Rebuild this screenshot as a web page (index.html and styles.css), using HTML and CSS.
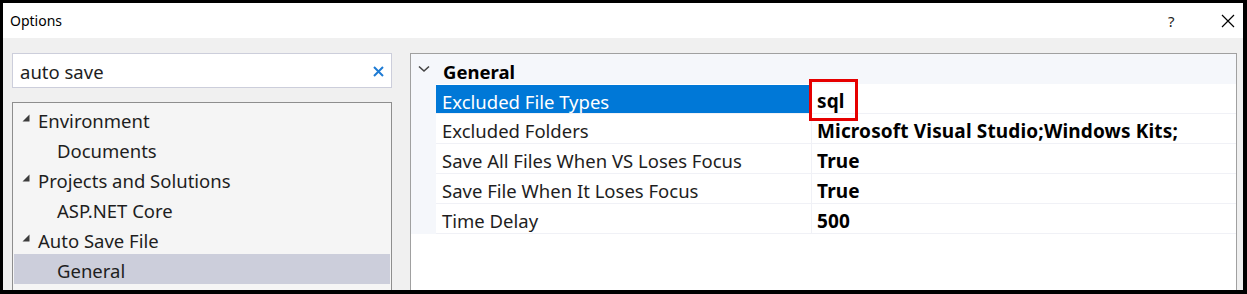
FILE: index.html
```html
<!DOCTYPE html>
<html>
<head>
<meta charset="utf-8">
<link rel="stylesheet" href="styles.css">
</head>
<body>
<div class="window">
  <div class="titlebar">
    <span class="title">Options</span>
    <span class="tb-help">?</span>
    <span class="tb-close"><svg width="14" height="14" viewBox="0 0 14 14"><path d="M1 1 L13 13 M13 1 L1 13" stroke="#000" stroke-width="1.2" fill="none"/></svg></span>
  </div>
  <div class="content">
    <div class="left">
      <div class="search">
        <span class="search-text">auto save</span>
        <svg class="search-clear" width="11" height="11" viewBox="0 0 11 11"><path d="M1 1 L10 10 M10 1 L1 10" stroke="#1e7bd4" stroke-width="2" fill="none"/></svg>
      </div>
      <div class="tree">
        <div class="node"><svg class="tri" width="8" height="8" viewBox="0 0 8 8"><polygon points="7.5,0.5 7.5,7.5 0.5,7.5" fill="#3c3c3c"/></svg><span>Environment</span></div>
        <div class="node child"><span>Documents</span></div>
        <div class="node"><svg class="tri" width="8" height="8" viewBox="0 0 8 8"><polygon points="7.5,0.5 7.5,7.5 0.5,7.5" fill="#3c3c3c"/></svg><span>Projects and Solutions</span></div>
        <div class="node child"><span>ASP.NET Core</span></div>
        <div class="node"><svg class="tri" width="8" height="8" viewBox="0 0 8 8"><polygon points="7.5,0.5 7.5,7.5 0.5,7.5" fill="#3c3c3c"/></svg><span>Auto Save File</span></div>
        <div class="node child selected"><span>General</span></div>
      </div>
    </div>
    <div class="grid">
      <div class="cat">
        <svg class="chev" width="12" height="8" viewBox="0 0 12 8"><polyline points="1,1.5 6,6 11,1.5" stroke="#444" stroke-width="1.6" fill="none"/></svg>
        <span class="cat-name">General</span>
      </div>
      <div class="prop selected">
        <div class="margin"></div>
        <div class="pname">Excluded File Types</div>
        <div class="pval"><span>sql</span><span class="highlight"></span></div>
      </div>
      <div class="prop">
        <div class="margin"></div>
        <div class="pname">Excluded Folders</div>
        <div class="pval"><span>Microsoft Visual Studio;Windows Kits;</span></div>
      </div>
      <div class="prop">
        <div class="margin"></div>
        <div class="pname">Save All Files When VS Loses Focus</div>
        <div class="pval"><span>True</span></div>
      </div>
      <div class="prop">
        <div class="margin"></div>
        <div class="pname">Save File When It Loses Focus</div>
        <div class="pval"><span>True</span></div>
      </div>
      <div class="prop">
        <div class="margin"></div>
        <div class="pname">Time Delay</div>
        <div class="pval"><span>500</span></div>
      </div>
    </div>
  </div>
</div>
</body>
</html>
```
FILE: styles.css
```css
* { box-sizing: border-box; }
html, body { margin: 0; padding: 0; }
body {
  background: #000;
  font-family: "Noto Sans", "Open Sans", sans-serif;
  color: #1e1e1e;
  width: 1247px;
  height: 294px;
  overflow: hidden;
}
.window {
  margin: 3px 4px 0 3px;
  height: 287px;
  background: #f0f0f0;
  display: flex;
  flex-direction: column;
  overflow: hidden;
}
.titlebar {
  height: 35px;
  flex: none;
  background: #fff;
  display: flex;
  align-items: center;
  padding-left: 7px;
}
.title {
  font-size: 14px;
  color: #000;
  flex: 1;
}
.tb-help {
  font-size: 15px;
  color: #222;
  width: 20px;
  margin-right: 33px;
}
.tb-close {
  width: 14px;
  height: 14px;
  margin-right: 8px;
  display: flex;
}
.content {
  flex: 1;
  display: flex;
  padding: 15px 6px 0 9px;
  gap: 18px;
  min-height: 0;
}
.left {
  width: 380px;
  flex: none;
  display: flex;
  flex-direction: column;
  gap: 14px;
}
.search {
  height: 35px;
  background: #fff;
  border: 1px solid #cccedb;
  display: flex;
  align-items: center;
  padding: 0 7px 0 7px;
}
.search-text {
  flex: 1;
  font-size: 18.5px;
  color: #1e1e1e;
  position: relative;
  top: 1px;
}
.search-clear { flex: none; margin-top: 1px; }
.tree {
  flex: 1;
  background: #f5f5f5;
  border: 1px solid #8e8e8e;
  border-bottom: none;
  padding: 1px 1px 0 1px;
}
.node {
  height: 30px;
  display: flex;
  align-items: center;
  padding-left: 8px;
  font-size: 18.5px;
}
.node span { position: relative; top: 1px; }
.node .tri { flex: none; margin-right: 8px; margin-top: -2px; }
.node.child { padding-left: 43px; }
.node.selected { background: #cccedb; }
.grid {
  flex: 1;
  background: #fff;
  border: 1px solid #a0a0a0;
  border-bottom: none;
  display: flex;
  flex-direction: column;
}
.cat {
  height: 30px;
  background: #f5f7fb;
  display: flex;
  align-items: center;
  padding-left: 7px;
}
.chev { flex: none; margin-right: 13px; margin-top: 0; }
.cat-name { font-size: 18.5px; font-weight: bold; color: #000; position: relative; top: 2px; }
.prop {
  height: 30px;
  display: flex;
  font-size: 18.5px;
}
.prop .margin {
  width: 25px;
  flex: none;
  background: #f5f7fb;
}
.prop .pname {
  width: 376px;
  flex: none;
  padding-left: 6px;
  padding-top: 4px;
  display: flex;
  align-items: center;
  border-bottom: 1px solid #f0f1f6;
  border-right: 1px solid #f0f1f6;
  color: #1e1e1e;
}
.prop .pval {
  flex: 1;
  padding-left: 5px;
  padding-top: 4px;
  display: flex;
  align-items: center;
  border-bottom: 1px solid #f0f1f6;
  font-weight: bold;
  font-size: 19px;
  letter-spacing: 0.15px;
  color: #000;
  position: relative;
}
.prop.selected .pname {
  background: #0078d7;
  color: #fff;
  border-top: 1px solid #fff;
}
.highlight {
  position: absolute;
  left: -3px;
  top: -5px;
  width: 49px;
  height: 42px;
  border: 3px solid #e60000;
}
```
